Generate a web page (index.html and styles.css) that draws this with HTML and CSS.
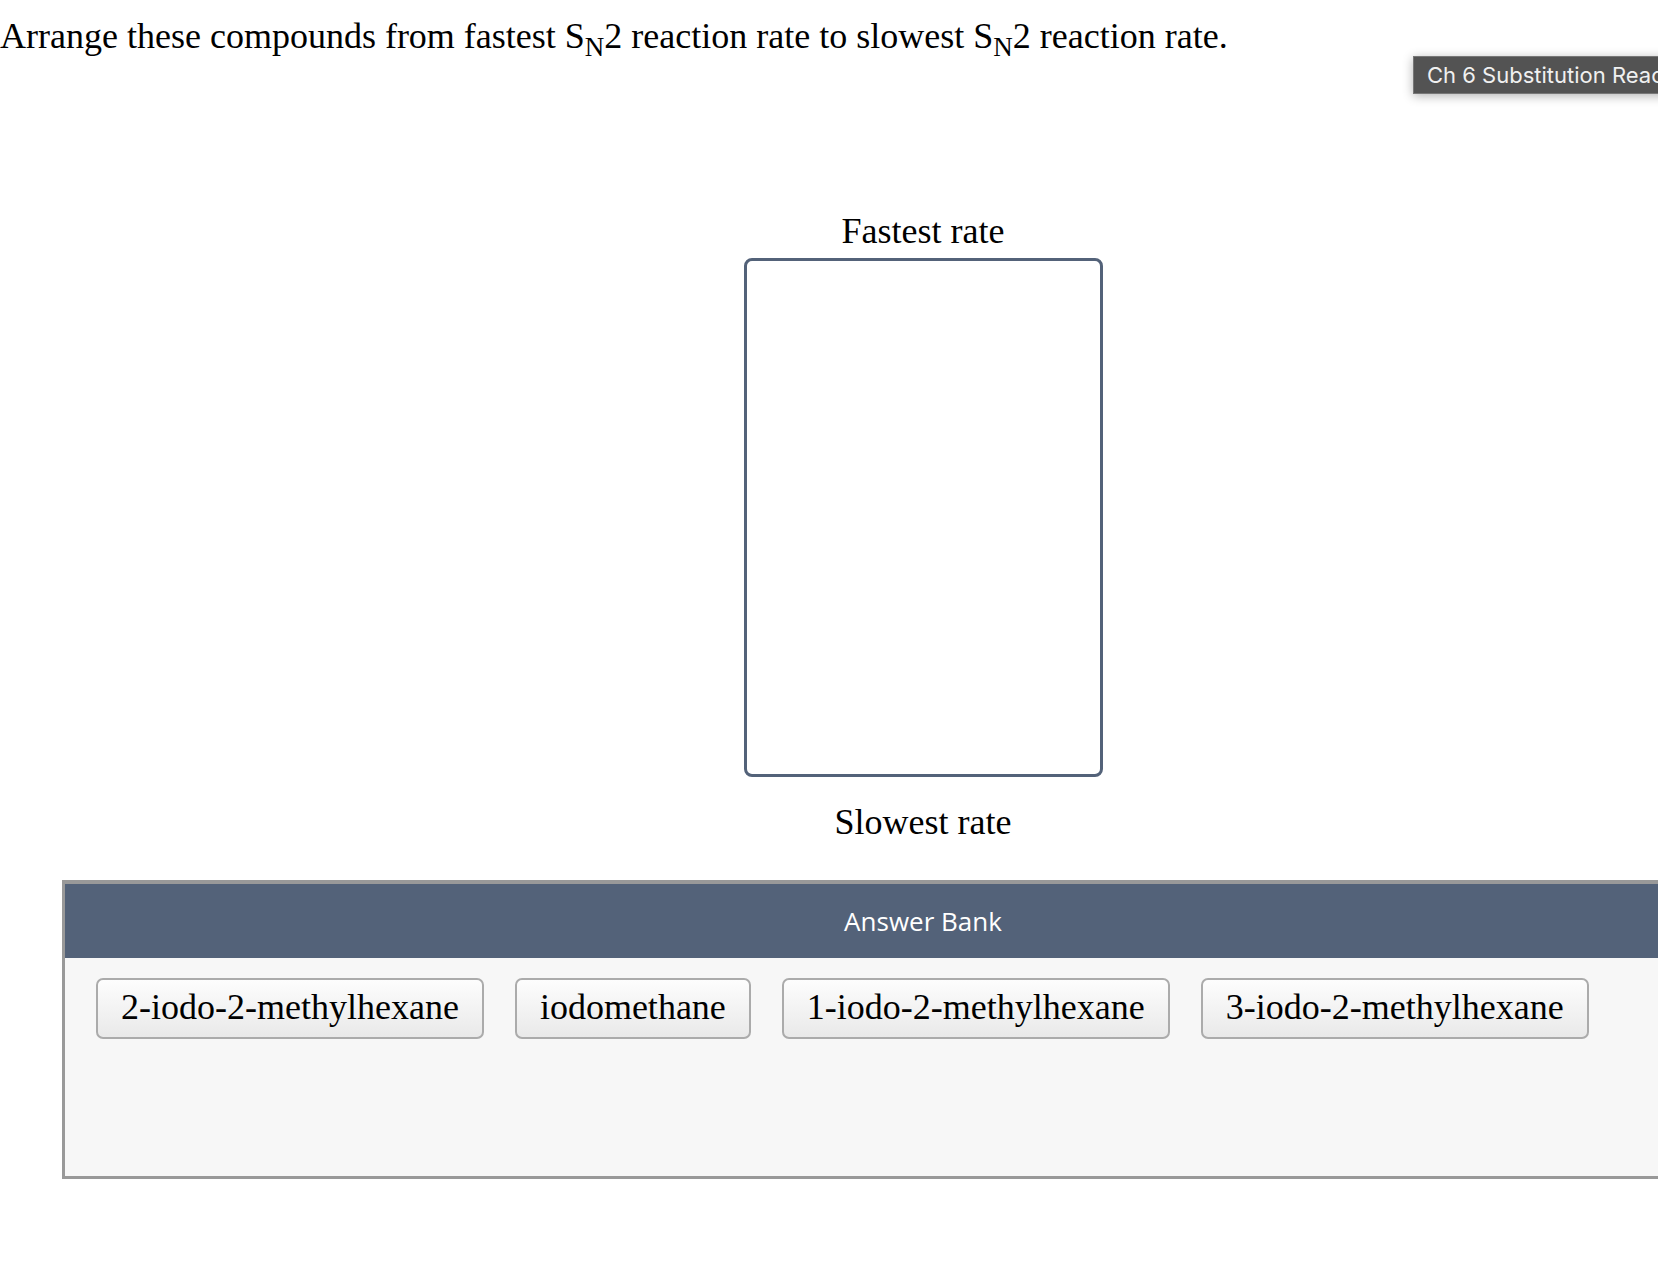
FILE: index.html
```html
<!DOCTYPE html>
<html lang="en">
<head>
    <meta charset="UTF-8">
    <title>Ordering question</title>
    <link rel="stylesheet" href="styles.css">
</head>
<body>

<div class="page">
    <h1 class="prompt">Arrange these compounds from fastest S<sub>N</sub>2 reaction rate to slowest S<sub>N</sub>2 reaction rate.</h1>

    <div class="tooltip">Ch 6 Substitution Reactions</div>

    <div class="ranking">
        <div class="rank-label">Fastest rate</div>
        <div class="drop-zone"></div>
        <div class="rank-label">Slowest rate</div>
    </div>

    <div class="answer-bank">
        <div class="bank-header">Answer Bank</div>
        <div class="bank-body">
            <button class="chip">2-iodo-2-methylhexane</button>
            <button class="chip">iodomethane</button>
            <button class="chip">1-iodo-2-methylhexane</button>
            <button class="chip">3-iodo-2-methylhexane</button>
        </div>
    </div>
</div>

</body>
</html>
```

FILE: styles.css
```css
html {
    overflow: hidden;
}
body {
    margin: 0;
    background: #fff;
    color: #000;
    font-family: "Liberation Serif", "Times New Roman", serif;
}
.page {
    position: relative;
    width: 1846px;
    padding-top: 16px;
}
.prompt {
    margin: 0;
    font-size: 36px;
    font-weight: normal;
    line-height: 40px;
}
.prompt sub {
    font-size: 27px;
    line-height: 0;
    vertical-align: -8px;
}
.tooltip {
    position: absolute;
    top: 56px;
    left: 1413px;
    padding: 0 13px;
    height: 36px;
    line-height: 36px;
    white-space: nowrap;
    background: #535353;
    border: 1px solid #777;
    color: #f0f0f0;
    font-family: Inter, "Liberation Sans", sans-serif;
    font-size: 22px;
    box-shadow: 0 2px 10px rgba(0, 0, 0, 0.3);
}
.ranking {
    display: flex;
    flex-direction: column;
    align-items: center;
    margin-top: 155px;
}
.rank-label {
    font-size: 36px;
    line-height: 40px;
}
.drop-zone {
    box-sizing: border-box;
    width: 359px;
    height: 519px;
    margin: 7px 0 25px 0;
    border: 3px solid #536279;
    border-radius: 8px;
}
.answer-bank {
    margin: 38px 62px 0 62px;
    border: 3px solid #999;
    border-top-width: 4px;
}
.bank-header {
    height: 74px;
    display: flex;
    align-items: center;
    justify-content: center;
    background: #536279;
    color: #fff;
    font-family: "Open Sans", sans-serif;
    font-size: 26px;
}
.bank-body {
    box-sizing: border-box;
    height: 218px;
    padding: 20px 31px;
    display: flex;
    align-items: flex-start;
    gap: 31px;
    background: #f7f7f7;
}
.chip {
    padding: 7px 23px 10px 23px;
    font-family: "Liberation Serif", "Times New Roman", serif;
    font-size: 36px;
    line-height: 40px;
    color: #000;
    background: linear-gradient(#fdfdfd, #e9e9e9);
    border: 2px solid #ababab;
    border-radius: 7px;
    cursor: pointer;
}
```
